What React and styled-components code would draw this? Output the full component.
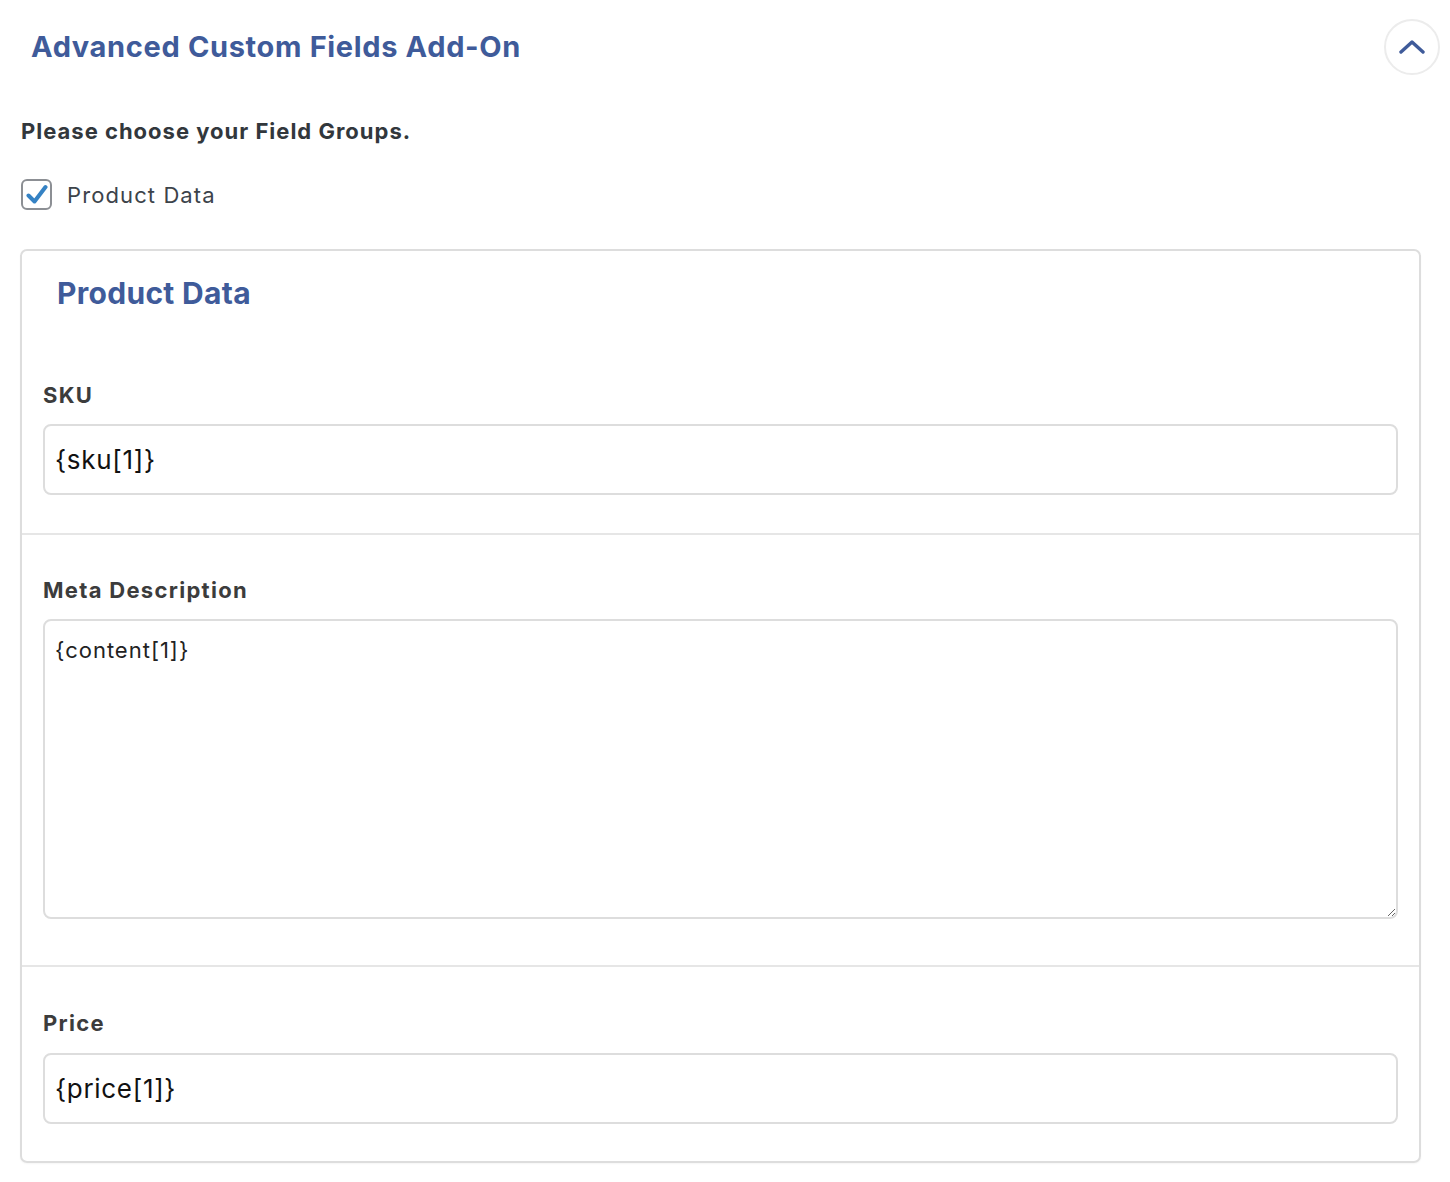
import React from "react";
import styled, { createGlobalStyle } from "styled-components";

const GlobalStyle = createGlobalStyle`
  body {
    margin: 0;
    background: #ffffff;
    font-family: Inter, "Noto Sans", sans-serif;
  }
`;

const Page = styled.div`
  padding: 19px 29px 20px 20px;
`;

const Header = styled.div`
  display: flex;
  align-items: center;
  justify-content: space-between;
  margin-right: -19px;
  padding-left: 11px;
`;

const Title = styled.h2`
  margin: 0;
  font-size: 29px;
  line-height: 36px;
  font-weight: 700;
  letter-spacing: 0.65px;
  color: #3f5b9a;
`;

const ToggleButton = styled.button`
  width: 56px;
  height: 56px;
  border-radius: 50%;
  border: 2px solid #ececec;
  background: #fff;
  display: flex;
  align-items: center;
  justify-content: center;
  padding: 0;
  cursor: pointer;
`;

const Intro = styled.p`
  margin: 41px 0 0 1px;
  font-size: 22px;
  line-height: 30px;
  font-weight: 700;
  letter-spacing: 1px;
  color: #32373c;
`;

const CheckRow = styled.label`
  display: flex;
  align-items: center;
  gap: 15px;
  margin: 33px 0 0 1px;
  font-size: 22px;
  line-height: 30px;
  letter-spacing: 1.1px;
  color: #3c434a;
`;

const CheckBox = styled.span`
  width: 31px;
  height: 31px;
  box-sizing: border-box;
  border: 2px solid #8c8f94;
  border-radius: 6px;
  display: flex;
  align-items: center;
  justify-content: center;
`;

const Card = styled.div`
  margin-top: 39px;
  border: 2px solid #dddddd;
  border-radius: 7px;
  box-shadow: 0 1px 2px rgba(0, 0, 0, 0.04);
`;

const CardTitle = styled.h3`
  margin: 0;
  padding: 24px 35px 0;
  font-size: 30px;
  line-height: 36px;
  font-weight: 700;
  letter-spacing: 0.3px;
  color: #3f5b9a;
`;

const Field = styled.div`
  padding: ${(p) => p.$top || "40px"} 21px ${(p) => p.$bottom || "38px"};
  border-top: ${(p) => (p.$first ? "none" : "2px solid #e6e6e6")};
`;

const Label = styled.div`
  font-size: 22px;
  line-height: 30px;
  font-weight: 700;
  letter-spacing: 1.3px;
  color: #3c3c3c;
  margin-bottom: ${(p) => p.$gap || "14px"};
`;

const TextInput = styled.input`
  display: block;
  width: 100%;
  height: 71px;
  box-sizing: border-box;
  border: 2px solid #dddddd;
  border-radius: 8px;
  padding: 0 10px;
  font-family: Inter, "Noto Sans", sans-serif;
  font-size: 26px;
  letter-spacing: 0.7px;
  color: #111;
  background: #fff;
  outline: none;
`;

const TextArea = styled.textarea`
  display: block;
  width: 100%;
  height: 300px;
  box-sizing: border-box;
  border: 2px solid #dddddd;
  border-radius: 8px;
  padding: 14px 10px;
  font-family: Inter, "Noto Sans", sans-serif;
  font-size: 22px;
  line-height: 30px;
  letter-spacing: 1px;
  color: #222;
  background: #fff;
  resize: vertical;
  outline: none;
  margin-bottom: 8px;
`;

export default function App() {
  return (
    <>
      <GlobalStyle />
      <Page>
        <Header>
          <Title>Advanced Custom Fields Add-On</Title>
          <ToggleButton aria-label="Collapse">
            <svg width="26" height="14" viewBox="0 0 26 14" fill="none">
              <path
                d="M2 12 L13 2 L24 12"
                stroke="#3f5b9a"
                strokeWidth="3.4"
                strokeLinecap="round"
                strokeLinejoin="round"
              />
            </svg>
          </ToggleButton>
        </Header>

        <Intro>Please choose your Field Groups.</Intro>

        <CheckRow>
          <CheckBox>
            <svg width="22" height="22" viewBox="0 0 22 22" fill="none">
              <path
                d="M2.5 11.5 L8.5 17.5 L19.5 3"
                stroke="#3582c4"
                strokeWidth="4"
                strokeLinecap="round"
                strokeLinejoin="round"
              />
            </svg>
          </CheckBox>
          Product Data
        </CheckRow>

        <Card>
          <CardTitle>Product Data</CardTitle>
          <Field $first $top="69px">
            <Label>SKU</Label>
            <TextInput defaultValue="{sku[1]}" />
          </Field>
          <Field>
            <Label>Meta Description</Label>
            <TextArea defaultValue="{content[1]}" />
          </Field>
          <Field $top="41px" $bottom="37px">
            <Label $gap="15px">Price</Label>
            <TextInput defaultValue="{price[1]}" />
          </Field>
        </Card>
      </Page>
    </>
  );
}
